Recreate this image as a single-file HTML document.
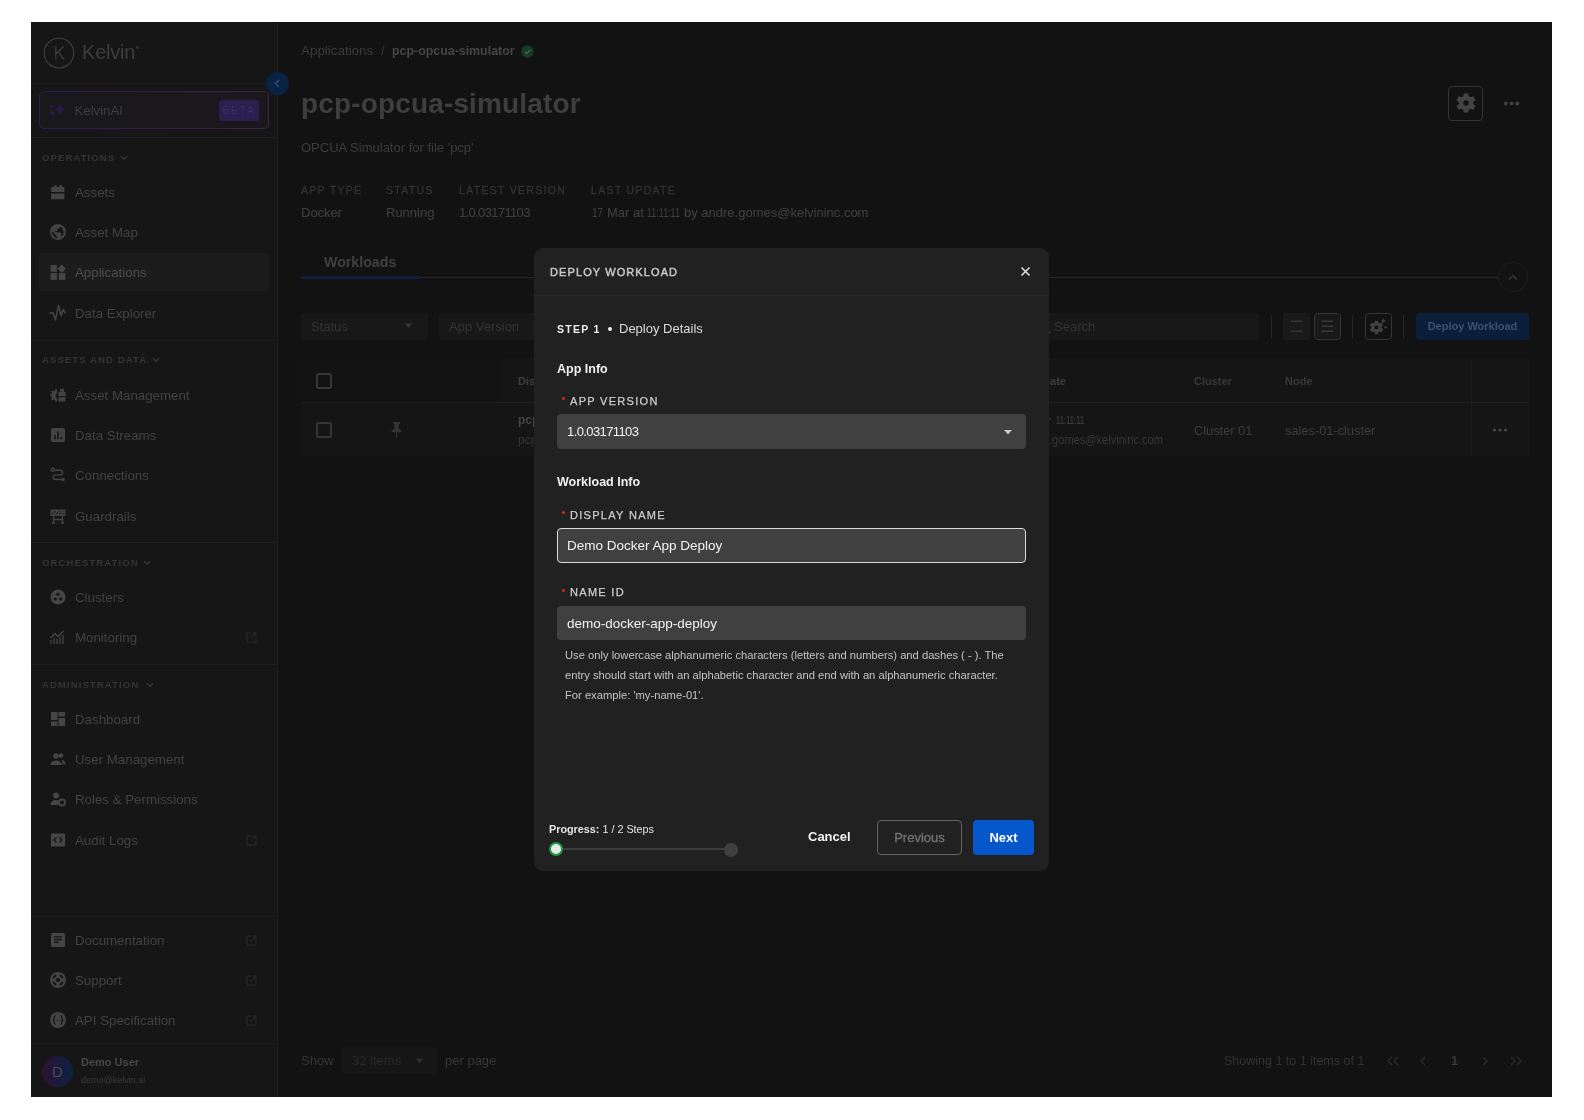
<!DOCTYPE html>
<html><head><meta charset="utf-8">
<style>
*{box-sizing:border-box;margin:0;padding:0}
html,body{width:1584px;height:1120px;background:#fff;overflow:hidden;font-family:"Liberation Sans",sans-serif}
.a{position:absolute;white-space:nowrap}
#app{position:absolute;left:31px;top:22px;width:1521px;height:1075px;background:#121212;overflow:hidden}
#side{position:absolute;left:31px;top:22px;width:247px;height:1075px;background:#161616;border-right:1px solid #1c1c1c}
.sep{position:absolute;left:31px;width:246px;height:1px;background:#1e1e1e}
.sec{position:absolute;left:42px;margin-top:1px;font-size:9.6px;font-weight:700;letter-spacing:1.05px;color:#343434;line-height:12px}
.it{position:absolute;left:75px;margin-top:1px;font-size:13.3px;color:#424242;line-height:16px}
.ic{position:absolute;left:50px;width:16px;height:16px}
.ext{position:absolute;left:246px;width:11px;height:11px}
.lbl{position:absolute;font-size:10.5px;letter-spacing:1.3px;color:#323232;line-height:12px;-webkit-text-stroke:0.3px #323232}
.val{position:absolute;font-size:13px;color:#3e3e3e;line-height:16px;margin-top:1px;-webkit-text-stroke:0.15px #3e3e3e}
</style></head><body>
<div id="root" style="position:absolute;left:0;top:0;width:1584px;height:1120px;will-change:transform">
<div id="app"></div>
<div id="side"></div>

<!-- logo -->
<svg class="a" style="left:43px;top:37px" width="32" height="32" viewBox="0 0 32 32"><circle cx="16" cy="16" r="14.8" fill="none" stroke="#3c3c3c" stroke-width="1.2"/><path d="M12.8 9.5V22.5M12.8 17L20.5 9.5M15.2 14.8L21 22.5" stroke="#3e3e3e" stroke-width="1.3" fill="none"/><circle cx="10" cy="9.8" r="0.7" fill="#3e3e3e"/></svg>
<div class="a" style="left:82px;top:40px;font-size:20px;color:#3d3d3d;line-height:24px;letter-spacing:-0.2px">Kelvin</div>
<div class="a" style="left:136px;top:46px;width:3px;height:3px;border-radius:50%;border:0.7px solid #454545"></div>

<div class="sep" style="top:83px"></div>
<!-- KelvinAI -->
<div class="a" style="left:39px;top:91px;width:230px;height:38px;border-radius:5px;background:linear-gradient(90deg,#2e1a54,#3a1c4c 60%,#3f2444);padding:1px"><div style="width:100%;height:100%;border-radius:4px;background:linear-gradient(90deg,#19181b,#1a181c)"></div></div>
<svg class="a" style="left:31px;top:92px" width="40" height="36" viewBox="31 92 40 36"><path d="M59.9 104.1 Q61.187999999999995 107.628 64.5 109 Q61.187999999999995 110.372 59.9 113.9 Q58.612 110.372 55.3 109 Q58.612 107.628 59.9 104.1Z M52.9 110.19999999999999 Q53.656 112.288 55.6 113.1 Q53.656 113.91199999999999 52.9 116.0 Q52.144 113.91199999999999 50.199999999999996 113.1 Q52.144 112.288 52.9 110.19999999999999Z" fill="#2b1954"/><circle cx="51.2" cy="106.2" r="1.5" fill="#2b1954"/></svg>
<div class="a" style="left:74.5px;top:103px;font-size:13.2px;color:#3e3e3e;line-height:16px">KelvinAI</div>
<div class="a" style="left:219px;top:100px;width:40px;height:21px;border-radius:3px;background:#2a2050;color:#372d68;font-size:10.5px;letter-spacing:1.6px;line-height:21px;text-align:center;font-weight:400">BETA</div>
<div class="sep" style="top:137px"></div>

<!-- collapse -->
<div class="a" style="left:265.5px;top:72px;width:23px;height:23px;border-radius:50%;background:#0a2344"></div>
<svg class="a" style="left:271.5px;top:78px" width="11" height="11" viewBox="0 0 11 11"><path d="M7 2L3.5 5.5L7 9" stroke="#2d4b74" stroke-width="1.6" fill="none"/></svg>


<!-- sidebar nav -->
<div class="sec" style="top:151px">OPERATIONS</div>
<svg class="a" style="left:120px;top:155px" width="8" height="6" viewBox="0 0 8 6"><path d="M1 1.2L4 4.2L7 1.2" stroke="#343434" stroke-width="1.5" fill="none"/></svg>
<svg class="ic" style="top:184px" viewBox="0 0 16 16"><path d="M1.1 3h13.3v5H1.1zM1.1 9.6h13.3v4.9a.8.8 0 0 1-.8.8H1.9a.8.8 0 0 1-.8-.8z" fill="#434343"/><path d="M3.9 3.5V2.4a1.5 1.5 0 0 1 3 0v1.1zM9.1 3.5V2.4a1.5 1.5 0 0 1 3 0v1.1z" fill="#434343"/></svg>
<div class="it" style="top:184px">Assets</div>
<svg class="ic" style="top:224px;overflow:visible" viewBox="0 0 16 16"><circle cx="7.9" cy="8" r="8" fill="#434343"/><path d="M5.2 7.1H7.6V5.2L10.6 2.8Q13 4.3 13.6 7.6Q13.8 10.2 12.4 12.2L11.2 11.4V8.8H10V8.2H5.2Z" fill="#161616"/><path d="M2.4 8.7L6.3 13.6" stroke="#161616" stroke-width="1.9" stroke-linecap="round"/></svg>
<div class="it" style="top:224px">Asset Map</div>
<div class="a" style="left:39px;top:253px;width:230px;height:38px;border-radius:4px;background:#1c1c1c"></div>
<svg class="ic" style="top:264px;overflow:visible" viewBox="0 0 16 16"><rect x="0.7" y="1.1" width="6.2" height="6.7" fill="#464646"/><rect x="0.7" y="9.1" width="6.2" height="6.8" fill="#464646"/><rect x="8.9" y="9.1" width="6.4" height="6.8" fill="#464646"/><path d="M11.75 0.6L15.95 4.8L11.75 9L7.55 4.8Z" fill="#464646"/></svg>
<div class="it" style="top:264px;color:#4c4c4c">Applications</div>
<svg class="ic" style="top:305px;overflow:visible" viewBox="0 0 16 16"><path d="M0.3 7.9H3.1L5.4 14.9L8.6 0.6L11.2 10.9L13.1 4.4L15.3 7.9" stroke="#434343" stroke-width="1.6" stroke-linejoin="round" stroke-linecap="round" fill="none"/></svg>
<div class="it" style="top:305px">Data Explorer</div>
<div class="sep" style="top:340px"></div>
<div class="sec" style="top:353px">ASSETS AND DATA</div>
<svg class="a" style="left:152px;top:357px" width="8" height="6" viewBox="0 0 8 6"><path d="M1 1.2L4 4.2L7 1.2" stroke="#343434" stroke-width="1.5" fill="none"/></svg>
<svg class="ic" style="top:387px" viewBox="0 0 16 16"><path d="M7 2.2h-1.6l-.4 1.5-1.3.6-1.3-.9-1.2 1.2.9 1.3-.6 1.3-1.5.3v1.7l1.5.3.6 1.3-.9 1.3 1.2 1.2 1.3-.9 1.3.6.4 1.5H7v-3.3a2.5 2.5 0 0 1 0-4.6z" fill="#434343"/><rect x="8.5" y="5" width="7" height="9.5" fill="#434343"/><rect x="10" y="1.8" width="4" height="3" fill="#434343"/><path d="M8.5 9.7h7" stroke="#161616" stroke-width="1"/></svg>
<div class="it" style="top:387px">Asset Management</div>
<svg class="ic" style="top:427px" viewBox="0 0 16 16"><rect x="1" y="1" width="14" height="14" rx="2" fill="#434343"/><path d="M4.8 12.2V8M8 12.2V4.5M11.2 12.2V9.8" stroke="#161616" stroke-width="1.6"/></svg>
<div class="it" style="top:427px">Data Streams</div>
<svg class="ic" style="top:467px" viewBox="0 0 16 16"><circle cx="2.8" cy="2.8" r="1.6" fill="none" stroke="#454545" stroke-width="1.3"/><path d="M4.4 3.3h5.8a2.3 2.3 0 0 1 0 4.6H5.5a2.3 2.3 0 0 0 0 4.6h6" stroke="#454545" stroke-width="1.4" fill="none"/><circle cx="13" cy="12.5" r="1.8" fill="#454545"/></svg>
<div class="it" style="top:467px">Connections</div>
<svg class="ic" style="top:508px" viewBox="0 0 16 16"><rect x="0.5" y="1.5" width="15" height="6.5" fill="#434343"/><path d="M2 6.8l4-4.2M5.5 6.8l4-4.2M9 6.8l4-4.2M12.5 6.8l2-2.1" stroke="#161616" stroke-width="1"/><rect x="1.5" y="2.5" width="13" height="4.5" fill="none" stroke="#434343" stroke-width="0.8"/><path d="M3.5 8v7M12.5 8v7M1.8 15h3.4M10.8 15h3.4M3.5 11.5h9" stroke="#434343" stroke-width="1.3"/></svg>
<div class="it" style="top:508px">Guardrails</div>
<div class="sep" style="top:542px"></div>
<div class="sec" style="top:556px">ORCHESTRATION</div>
<svg class="a" style="left:143px;top:560px" width="8" height="6" viewBox="0 0 8 6"><path d="M1 1.2L4 4.2L7 1.2" stroke="#343434" stroke-width="1.5" fill="none"/></svg>
<svg class="ic" style="top:589px" viewBox="0 0 16 16"><circle cx="8" cy="8" r="7.5" fill="#454545"/><circle cx="8" cy="5.2" r="1.6" fill="#161616"/><circle cx="5.3" cy="10" r="1.6" fill="#161616"/><circle cx="10.7" cy="10" r="1.6" fill="#161616"/></svg>
<div class="it" style="top:589px">Clusters</div>
<svg class="ic" style="top:629px" viewBox="0 0 16 16"><path d="M1 15V11M4 15V9M7 15V10M10 15V8M13 15V6" stroke="#454545" stroke-width="1.3"/><path d="M0.5 9L5 4.5l3 3L13.5 2" stroke="#454545" stroke-width="1.3" fill="none"/></svg>
<div class="it" style="top:629px">Monitoring</div>
<svg class="ext" style="top:632px" viewBox="0 0 11 11"><path d="M5 1H1v9h9V6M6.5 1H10v3.5M10 1L5 6" stroke="#2a2a2a" stroke-width="1" fill="none"/></svg>
<div class="sep" style="top:664px"></div>
<div class="sec" style="top:678px">ADMINISTRATION</div>
<svg class="a" style="left:146px;top:682px" width="8" height="6" viewBox="0 0 8 6"><path d="M1 1.2L4 4.2L7 1.2" stroke="#343434" stroke-width="1.5" fill="none"/></svg>
<svg class="ic" style="top:711px" viewBox="0 0 16 16"><rect x="1" y="1" width="6.5" height="8" fill="#454545"/><rect x="1" y="10.5" width="6.5" height="4.5" fill="#454545"/><rect x="8.5" y="1" width="6.5" height="4.5" fill="#454545"/><rect x="8.5" y="7" width="6.5" height="8" fill="#454545"/></svg>
<div class="it" style="top:711px">Dashboard</div>
<svg class="ic" style="top:751px" viewBox="0 0 16 16"><circle cx="6" cy="5" r="2.8" fill="#454545"/><path d="M0.5 14c0-3 2.5-4.5 5.5-4.5s5.5 1.5 5.5 4.5z" fill="#454545"/><circle cx="11" cy="4.5" r="2.3" fill="#454545"/><path d="M11.5 9c2.3.3 4 1.5 4 4.5h-3c0-1.8-.4-3.2-1-4.5z" fill="#454545"/></svg>
<div class="it" style="top:751px">User Management</div>
<svg class="ic" style="top:791px" viewBox="0 0 16 16"><circle cx="6" cy="4.5" r="3" fill="#454545"/><path d="M0.5 14c0-3 2.5-5 5.5-5 1 0 2 .2 2.6.5L8 14z" fill="#454545"/><circle cx="12" cy="11.5" r="3" fill="none" stroke="#454545" stroke-width="1.8"/></svg>
<div class="it" style="top:791px">Roles &amp; Permissions</div>
<svg class="ic" style="top:832px" viewBox="0 0 16 16"><rect x="1" y="1.5" width="14" height="13" rx="1" fill="#454545"/><path d="M6.5 5.5L4 8l2.5 2.5M9.5 5.5L12 8l-2.5 2.5" stroke="#161616" stroke-width="1.4" fill="none"/></svg>
<div class="it" style="top:832px">Audit Logs</div>
<svg class="ext" style="top:835px" viewBox="0 0 11 11"><path d="M5 1H1v9h9V6M6.5 1H10v3.5M10 1L5 6" stroke="#2a2a2a" stroke-width="1" fill="none"/></svg>
<div class="sep" style="top:916px"></div>
<svg class="ic" style="top:932px" viewBox="0 0 16 16"><rect x="1" y="1" width="14" height="14" rx="1.5" fill="#454545"/><path d="M4 4.8h8M4 7.5h8M4 10.2h5" stroke="#161616" stroke-width="1.3"/></svg>
<div class="it" style="top:932px">Documentation</div>
<svg class="ext" style="top:935px" viewBox="0 0 11 11"><path d="M5 1H1v9h9V6M6.5 1H10v3.5M10 1L5 6" stroke="#2a2a2a" stroke-width="1" fill="none"/></svg>
<svg class="ic" style="top:972px" viewBox="0 0 16 16"><circle cx="8" cy="8" r="8" fill="#434343"/><circle cx="8" cy="8" r="2.1" fill="#161616"/><path d="M12.33 10.50A5 5 0 0 1 10.50 12.33M5.50 12.33A5 5 0 0 1 3.67 10.50M3.67 5.50A5 5 0 0 1 5.50 3.67M10.50 3.67A5 5 0 0 1 12.33 5.50" stroke="#161616" stroke-width="2" stroke-linecap="round" fill="none"/></svg>
<div class="it" style="top:972px">Support</div>
<svg class="ext" style="top:975px" viewBox="0 0 11 11"><path d="M5 1H1v9h9V6M6.5 1H10v3.5M10 1L5 6" stroke="#2a2a2a" stroke-width="1" fill="none"/></svg>
<svg class="ic" style="top:1012px" viewBox="0 0 16 16"><circle cx="8" cy="8" r="8" fill="#434343"/><path d="M5.4 3.6c-1.3.2-1.2 1.4-1.2 2.3 0 .9-.5 1.9-1 2.1.5.2 1 1.2 1 2.1 0 .9-.1 2.1 1.2 2.3M10.6 3.6c1.3.2 1.2 1.4 1.2 2.3 0 .9.5 1.9 1 2.1-.5.2-1 1.2-1 2.1 0 .9.1 2.1-1.2 2.3" stroke="#161616" stroke-width="1.2" fill="none"/><circle cx="6.5" cy="8.2" r=".55" fill="#2a2a2a"/><circle cx="8" cy="8.2" r=".55" fill="#2a2a2a"/><circle cx="9.5" cy="8.2" r=".55" fill="#2a2a2a"/></svg>
<div class="it" style="top:1012px">API Specification</div>
<svg class="ext" style="top:1015px" viewBox="0 0 11 11"><path d="M5 1H1v9h9V6M6.5 1H10v3.5M10 1L5 6" stroke="#2a2a2a" stroke-width="1" fill="none"/></svg>
<div class="sep" style="top:1043px"></div>
<div class="a" style="left:42px;top:1056px;width:31px;height:31px;border-radius:50%;background:linear-gradient(90deg,#2e1234,#1c1a3a 50%,#0e2244)"></div>
<div class="a" style="left:42px;top:1056px;width:31px;height:31px;line-height:31px;text-align:center;font-size:15px;color:#4a4a5a">D</div>
<div class="a" style="left:81px;top:1055px;font-size:11px;font-weight:700;color:#474747;line-height:14px">Demo User</div>
<div class="a" style="left:81px;top:1074px;font-size:9px;color:#3a3a3a;line-height:12px">demo@kelvin.ai</div>


<!-- main header -->
<div class="a" style="left:301px;top:44px;font-size:13.4px;color:#3b3b3b;line-height:14px">Applications</div>
<div class="a" style="left:381px;top:44px;font-size:12.5px;color:#3a3a3a;line-height:14px">/</div>
<div class="a" style="left:392px;top:44px;font-size:12.4px;font-weight:700;color:#454545;line-height:14px">pcp-opcua-simulator</div>
<svg class="a" style="left:521px;top:45px" width="13" height="13" viewBox="0 0 13 13"><circle cx="6.5" cy="6.5" r="6.2" fill="#163a23"/><path d="M3.8 6.7L5.7 8.5L9.3 4.8" stroke="#3f6a4c" stroke-width="1.4" fill="none"/></svg>
<div class="a" style="left:301px;top:87px;font-size:28px;font-weight:700;color:#3e3e3e;line-height:34px;letter-spacing:0.15px">pcp-opcua-simulator</div>
<div class="a" style="left:1448px;top:86px;width:35px;height:35px;border-radius:4px;border:1.5px solid #343434"></div><svg class="a" style="left:1453.6px;top:91.4px" width="24" height="24" viewBox="0 0 24 24"><path d="M19.14 12.94c.04-.3.06-.61.06-.94 0-.32-.02-.64-.07-.94l2.03-1.58c.18-.14.23-.41.12-.61l-1.92-3.32c-.12-.22-.37-.29-.59-.22l-2.39.96c-.5-.38-1.03-.7-1.62-.94l-.36-2.54c-.04-.24-.24-.41-.48-.41h-3.840c-.24 0-.43.17-.47.41l-.36 2.54c-.59.24-1.13.57-1.62.94l-2.39-.96c-.22-.08-.47 0-.59.22L2.74 8.870c-.12.21-.08.47.12.61l2.03 1.58c-.05.3-.09.63-.09.94s.02.64.07.94l-2.03 1.58c-.18.14-.23.41-.12.61l1.92 3.32c.12.22.37.29.59.22l2.39-.96c.5.38 1.03.7 1.62.94l.36 2.54c.05.24.24.41.48.41h3.84c.24 0 .44-.17.47-.41l.36-2.54c.59-.24 1.13-.56 1.62-.94l2.39.96c.22.08.47 0 .59-.22l1.92-3.32c.12-.22.07-.47-.12-.61l-2.01-1.58zM12 14.7a2.7 2.7 0 1 1 0-5.4a2.7 2.7 0 1 1 0 5.4z" fill="#434343"/></svg>
<svg class="a" style="left:1503px;top:101px" width="17" height="5" viewBox="0 0 17 5"><circle cx="2.8" cy="2.4" r="2" fill="#404040"/><circle cx="8.5" cy="2.4" r="2" fill="#404040"/><circle cx="14.3" cy="2.4" r="2" fill="#404040"/></svg>
<div class="a" style="left:301px;top:140px;font-size:13px;color:#3c3c3c;line-height:16px">OPCUA Simulator for file 'pcp'</div>
<div class="lbl" style="left:301px;top:184px">APP TYPE</div>
<div class="lbl" style="left:386px;top:184px">STATUS</div>
<div class="lbl" style="left:459px;top:184px">LATEST VERSION</div>
<div class="lbl" style="left:591px;top:184px">LAST UPDATE</div>
<div class="val" style="left:301px;top:204px">Docker</div>
<div class="val" style="left:386px;top:204px">Running</div>
<div class="val" style="left:459px;top:204px;letter-spacing:-0.65px">1.0.03171103</div>
<div class="val" style="left:592px;top:204px;transform:scaleX(0.75);transform-origin:0 0">17</div><div class="val" style="left:607px;top:204px">Mar at</div><div class="val" style="left:647px;top:204px;transform:scaleX(0.69);transform-origin:0 0">11:11:11</div><div class="val" style="left:684px;top:204px">by andre.gomes@kelvininc.com</div>
<!-- tabs -->
<div class="a" style="left:324px;top:253px;font-size:14.2px;font-weight:700;color:#404040;line-height:18px">Workloads</div>
<div class="a" style="left:301px;top:277px;width:1198px;height:1px;background:#262626"></div>
<div class="a" style="left:301px;top:276px;width:119px;height:2.5px;background:#0d1f3a"></div>
<div class="a" style="left:1498px;top:262px;width:30px;height:30px;border-radius:50%;border:1px solid #1e1e1e;background:#121212"></div>
<svg class="a" style="left:1507px;top:273px" width="12" height="9" viewBox="0 0 12 9"><path d="M2 6.5L6 2.5L10 6.5" stroke="#303030" stroke-width="1.9" fill="none"/></svg>
<!-- filters -->
<div class="a" style="left:301px;top:313px;width:127px;height:27px;border-radius:4px;background:#181818"></div>
<div class="a" style="left:311px;top:319px;font-size:13px;color:#343434;line-height:15px">Status</div>
<svg class="a" style="left:404px;top:323px" width="9" height="6" viewBox="0 0 9 6"><path d="M0.5 0.5h8L4.5 5z" fill="#373737"/></svg>
<div class="a" style="left:439px;top:313px;width:100px;height:27px;border-radius:4px;background:#181818"></div>
<div class="a" style="left:449px;top:319px;font-size:13px;color:#343434;line-height:15px">App Version</div>
<div class="a" style="left:1030px;top:313px;width:229px;height:27px;border-radius:4px;background:#181818"></div>
<svg class="a" style="left:1036px;top:319px" width="16" height="16" viewBox="0 0 16 16"><circle cx="6.5" cy="6.5" r="4.5" fill="none" stroke="#373737" stroke-width="1.6"/><path d="M10 10l4 4" stroke="#373737" stroke-width="1.8"/></svg>
<div class="a" style="left:1054px;top:319px;font-size:13px;color:#343434;line-height:15px">Search</div>
<div class="a" style="left:1271px;top:315px;width:1px;height:23px;background:#262626"></div>
<div class="a" style="left:1283px;top:313px;width:27px;height:27px;border-radius:3px;background:#1a1a1a"></div>
<svg class="a" style="left:1283px;top:313px" width="27" height="27" viewBox="1283 313 27 27"><path d="M1291 321.2h11.3M1291 331.2h11.3" stroke="#333" stroke-width="1.5"/></svg>
<div class="a" style="left:1314px;top:313px;width:27px;height:27px;border-radius:3.5px;border:1.5px solid #353535;background:#191919"></div>
<svg class="a" style="left:1314px;top:313px" width="27" height="27" viewBox="1314 313 27 27"><path d="M1321.5 321.2h11.5M1321.5 326.2h11.5M1321.5 331.2h11.5" stroke="#383838" stroke-width="1.5"/></svg>
<div class="a" style="left:1352px;top:315px;width:1px;height:23px;background:#262626"></div>
<div class="a" style="left:1365px;top:313px;width:27px;height:27px;border-radius:3.5px;border:1.5px solid #353535"></div>
<svg class="a" style="left:1367.95px;top:319.35px" width="16.9" height="16.9" viewBox="0 0 24 24"><path d="M19.14 12.94c.04-.3.06-.61.06-.94 0-.32-.02-.64-.07-.94l2.03-1.58c.18-.14.23-.41.12-.61l-1.92-3.32c-.12-.22-.37-.29-.59-.22l-2.39.96c-.5-.38-1.03-.7-1.62-.94l-.36-2.54c-.04-.24-.24-.41-.48-.41h-3.840c-.24 0-.43.17-.47.41l-.36 2.54c-.59.24-1.130.57-1.62.94l-2.39-.96c-.22-.08-.47 0-.59.22L2.74 8.870c-.12.21-.08.47.12.61l2.03 1.58c-.05.3-.09.63-.09.94s.02.64.07.94l-2.03 1.58c-.18.14-.23.41-.12.61l1.92 3.32c.12.22.37.29.59.22l2.39-.96c.5.38 1.03.7 1.62.94l.36 2.54c.05.24.24.41.48.41h3.84c.24 0 .44-.17.47-.41l.36-2.54c.59-.24 1.13-.56 1.62-.94l2.39.96c.22.08.47 0 .59-.22l1.92-3.32c.12-.22.07-.47-.12-.61l-2.01-1.58zM12 14.7a2.7 2.7 0 1 1 0-5.4a2.7 2.7 0 1 1 0 5.4z" fill="#404040"/></svg>
<svg class="a" style="left:1378px;top:316px" width="12" height="15" viewBox="1378 316 12 15"><path d="M1383.4 318.2 Q1384.0500000000002 320.3 1386.0 321 Q1384.0500000000002 321.7 1383.4 323.8 Q1382.75 321.7 1380.8000000000002 321 Q1382.75 320.3 1383.4 318.2Z M1385.6 325.7 Q1386.0 326.97499999999997 1387.1999999999998 327.4 Q1386.0 327.825 1385.6 329.09999999999997 Q1385.1999999999998 327.825 1384.0 327.4 Q1385.1999999999998 326.97499999999997 1385.6 325.7Z" fill="#404040"/></svg>
<div class="a" style="left:1403px;top:315px;width:1px;height:23px;background:#262626"></div>
<div class="a" style="left:1416px;top:313px;width:113px;height:27px;border-radius:4px;background:#0c1f3a;color:#3b5272;font-size:11px;font-weight:700;line-height:27px;text-align:center">Deploy Workload</div>
<!-- table -->
<div class="a" style="left:301px;top:359px;width:1228px;height:97px;background:#151515"></div>
<div class="a" style="left:301px;top:359px;width:202px;height:43px;background:#131313"></div>
<div class="a" style="left:301px;top:402px;width:1228px;height:1px;background:#1e1e1e"></div>
<div class="a" style="left:1471px;top:359px;width:1px;height:97px;background:#1c1c1c"></div>
<div class="a" style="left:316px;top:373px;width:16px;height:16px;border-radius:2.5px;border:2px solid #363636"></div>
<div class="a" style="left:316px;top:422px;width:16px;height:16px;border-radius:2.5px;border:2px solid #363636"></div>
<svg class="a" style="left:390px;top:421px" width="13" height="17" viewBox="0 0 13 17"><path d="M3 1h7v1.5l-1.2.8v4.2l2.7 2.5v1.3H1.5V10l2.7-2.5V3.3L3 2.5z" fill="#333"/><path d="M6.5 11v5.5" stroke="#333" stroke-width="1.2"/></svg>
<div class="a" style="left:518px;top:374px;font-size:11px;font-weight:700;color:#3e3e3e;line-height:14px">Display Name</div>
<div class="a" style="left:1003px;top:374px;font-size:11px;font-weight:700;color:#3e3e3e;line-height:14px">Last Update</div>
<div class="a" style="left:1194px;top:374px;font-size:11px;font-weight:700;color:#383838;line-height:14px">Cluster</div>
<div class="a" style="left:1285px;top:374px;font-size:11px;font-weight:700;color:#383838;line-height:14px">Node</div>
<div class="a" style="left:518px;top:413px;font-size:12px;font-weight:700;color:#444;line-height:14px">pcp-opcua-simulator</div>
<div class="a" style="left:518px;top:433px;font-size:12px;color:#353535;line-height:15px">pcp-opcua-simulator</div>
<div class="a" style="left:1055.5px;top:413px;font-size:11.5px;font-weight:700;color:#383838;line-height:14px;transform:scaleX(0.635);transform-origin:0 0">11:11:11</div><div class="a" style="left:1030.5px;top:413px;font-size:11.5px;font-weight:700;color:#383838;line-height:14px">Mar</div>
<div class="a" style="left:1048.5px;top:433px;font-size:12.5px;color:#363636;line-height:15px;transform:scaleX(0.885);transform-origin:0 0">.gomes@kelvininc.com</div>
<div class="a" style="left:1194px;top:423px;font-size:12.8px;color:#3d3d3d;line-height:16px">Cluster 01</div>
<div class="a" style="left:1285px;top:423px;font-size:12.8px;color:#3d3d3d;line-height:16px">sales-01-cluster</div>
<svg class="a" style="left:1492px;top:427px" width="16" height="6" viewBox="0 0 16 6"><circle cx="2.5" cy="3" r="1.6" fill="#444"/><circle cx="8" cy="3" r="1.6" fill="#444"/><circle cx="13.5" cy="3" r="1.6" fill="#444"/></svg>
<!-- footer -->
<div class="a" style="left:301px;top:1053px;font-size:13px;color:#363636;line-height:16px">Show</div>
<div class="a" style="left:341px;top:1047px;width:96px;height:27px;border-radius:4px;background:#161616"></div>
<div class="a" style="left:352px;top:1053px;font-size:13px;color:#282828;line-height:16px">32 items</div>
<svg class="a" style="left:415px;top:1058px" width="9" height="6" viewBox="0 0 9 6"><path d="M0.5 0.5h8L4.5 5z" fill="#2e2e2e"/></svg>
<div class="a" style="left:445px;top:1053px;font-size:13px;color:#363636;line-height:16px">per page</div>
<div class="a" style="left:1224px;top:1053px;font-size:12.5px;color:#333;line-height:16px">Showing 1 to 1 items of 1</div>
<svg class="a" style="left:1386px;top:1056px" width="14" height="10" viewBox="0 0 14 10"><path d="M6 1L2 5l4 4M12 1L8 5l4 4" stroke="#2c2c2c" stroke-width="1.3" fill="none"/></svg>
<svg class="a" style="left:1419px;top:1056px" width="8" height="10" viewBox="0 0 8 10"><path d="M6 1L2 5l4 4" stroke="#2c2c2c" stroke-width="1.3" fill="none"/></svg>
<div class="a" style="left:1451px;top:1053px;font-size:12.5px;font-weight:700;color:#3a3a3a;line-height:16px">1</div>
<svg class="a" style="left:1481px;top:1056px" width="8" height="10" viewBox="0 0 8 10"><path d="M2 1l4 4-4 4" stroke="#2c2c2c" stroke-width="1.3" fill="none"/></svg>
<svg class="a" style="left:1509px;top:1056px" width="14" height="10" viewBox="0 0 14 10"><path d="M2 1l4 4-4 4M8 1l4 4-4 4" stroke="#2c2c2c" stroke-width="1.3" fill="none"/></svg>


<!-- modal -->
<div class="a" style="left:534px;top:248px;width:515px;height:623px;border-radius:9px;background:#212121"></div>
<div class="a" style="left:534px;top:295px;width:515px;height:1px;background:#2a2a2a"></div>
<div class="a" style="left:550px;top:266px;font-size:11px;font-weight:400;letter-spacing:1.1px;color:#c8c8c8;line-height:13px;-webkit-text-stroke:0.45px #c8c8c8">DEPLOY WORKLOAD</div>
<svg class="a" style="left:1020px;top:266px" width="11" height="11" viewBox="0 0 11 11"><path d="M1.5 1.5L9.5 9.5M9.5 1.5L1.5 9.5" stroke="#d6d6d6" stroke-width="1.7"/></svg>
<div class="a" style="left:557px;top:323px;font-size:10.5px;font-weight:700;letter-spacing:1.25px;color:#ececec;line-height:13px">STEP 1</div>
<div class="a" style="left:608px;top:327px;width:4px;height:4px;border-radius:50%;background:#ececec"></div>
<div class="a" style="left:619px;top:321px;font-size:13px;color:#dadada;line-height:15px">Deploy Details</div>
<div class="a" style="left:557px;top:362px;font-size:12.5px;font-weight:700;color:#f0f0f0;line-height:15px">App Info</div>
<div class="a" style="left:561.5px;top:397px;width:3px;height:3px;border-radius:50%;background:#e02424"></div>
<div class="a" style="left:570px;top:395px;font-size:11px;letter-spacing:1.3px;color:#cdcdcd;line-height:12px;-webkit-text-stroke:0.25px #cdcdcd">APP VERSION</div>
<div class="a" style="left:557px;top:414px;width:469px;height:35px;border-radius:4px;background:#404040"></div>
<div class="a" style="left:567px;top:424px;font-size:13px;color:#f2f2f2;line-height:15px;letter-spacing:-0.6px">1.0.03171103</div>
<svg class="a" style="left:1003.5px;top:430px" width="8" height="5" viewBox="0 0 8 5"><path d="M0 0h8L4 4.5z" fill="#c8c8c8"/></svg>
<div class="a" style="left:557px;top:475px;font-size:12.5px;font-weight:700;color:#f0f0f0;line-height:15px">Workload Info</div>
<div class="a" style="left:561.5px;top:511px;width:3px;height:3px;border-radius:50%;background:#e02424"></div>
<div class="a" style="left:570px;top:509px;font-size:11px;letter-spacing:1.3px;color:#cdcdcd;line-height:12px;-webkit-text-stroke:0.25px #cdcdcd">DISPLAY NAME</div>
<div class="a" style="left:557px;top:528px;width:469px;height:35px;border-radius:4px;background:#404040;border:1.5px solid #dadada"></div>
<div class="a" style="left:567px;top:538px;font-size:13.5px;color:#f2f2f2;line-height:15px">Demo Docker App Deploy</div>
<div class="a" style="left:561.5px;top:589px;width:3px;height:3px;border-radius:50%;background:#e02424"></div>
<div class="a" style="left:570px;top:586px;font-size:11px;letter-spacing:1.3px;color:#cdcdcd;line-height:12px;-webkit-text-stroke:0.25px #cdcdcd">NAME ID</div>
<div class="a" style="left:557px;top:606px;width:469px;height:34px;border-radius:4px;background:#404040"></div>
<div class="a" style="left:567px;top:616px;font-size:13.5px;color:#f2f2f2;line-height:15px">demo-docker-app-deploy</div>
<div class="a" style="left:565px;top:645px;font-size:11.2px;color:#c4c4c4;line-height:20px;white-space:normal;width:450px">Use only lowercase alphanumeric characters (letters and numbers) and dashes ( - ). The<br>entry should start with an alphabetic character and end with an alphanumeric character.<br>For example: 'my-name-01'.</div>
<!-- footer -->
<div class="a" style="left:549px;top:823px;font-size:10.8px;color:#e4e4e4;line-height:13px"><b>Progress:</b> 1 / 2 Steps</div>
<div class="a" style="left:556px;top:848px;width:175px;height:2px;background:#3c3c3c"></div>
<div class="a" style="left:549px;top:842px;width:14px;height:14px;border-radius:50%;background:#e8e8e8;border:2.5px solid #1c9a46"></div>
<div class="a" style="left:724px;top:843px;width:14px;height:14px;border-radius:50%;background:#404040"></div>
<div class="a" style="left:808px;top:829px;font-size:13px;font-weight:700;color:#f2f2f2;line-height:16px">Cancel</div>
<div class="a" style="left:877px;top:820px;width:85px;height:35px;border-radius:4px;border:1.5px solid #626262;color:#727272;font-size:13px;line-height:33px;text-align:center;-webkit-text-stroke:0.35px #727272">Previous</div>
<div class="a" style="left:973px;top:820px;width:61px;height:35px;border-radius:4px;background:#0657cc;color:#fff;font-size:13px;font-weight:700;line-height:35px;text-align:center">Next</div>

</div>
</body></html>
